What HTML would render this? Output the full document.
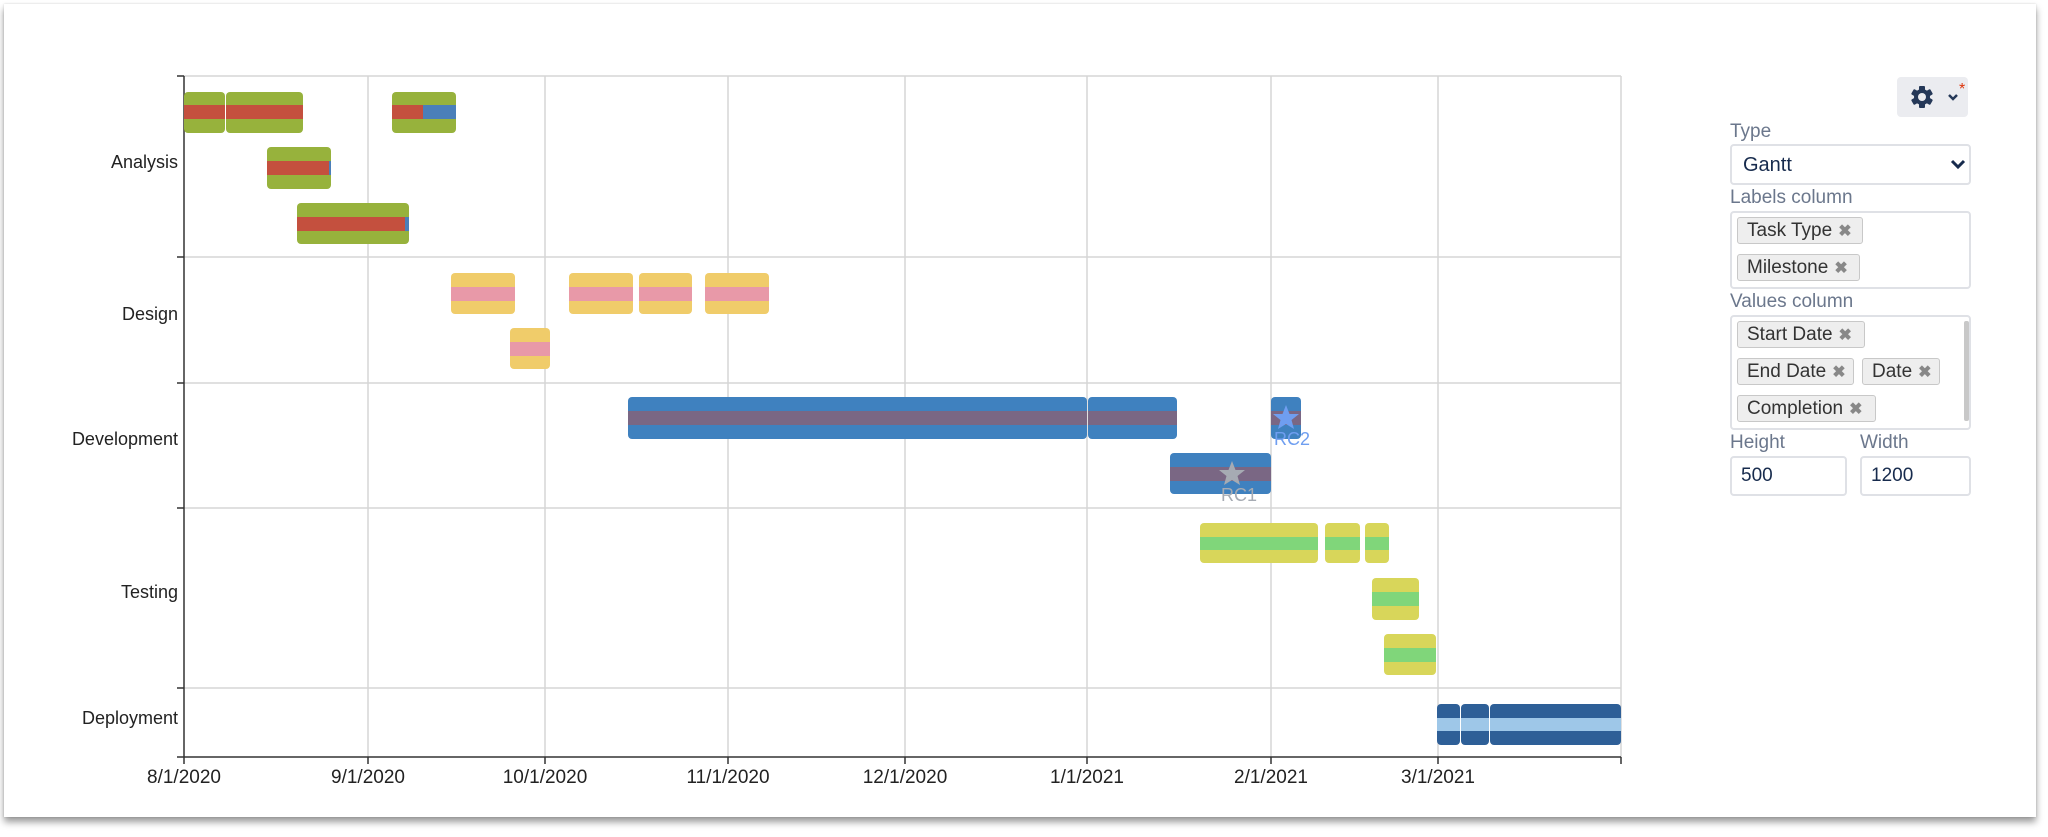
<!DOCTYPE html>
<html><head><meta charset="utf-8"><style>
html,body{margin:0;padding:0;width:2048px;height:837px;background:#fff;overflow:hidden;font-family:"Liberation Sans",sans-serif}
.card{position:absolute;left:4px;top:4px;width:2032px;height:813px;background:#fff;box-shadow:0 5px 7px rgba(0,0,0,.4),0 0 2px rgba(0,0,0,.15)}
.lbl{position:absolute;color:#6b778c;font-size:19px}
.box{position:absolute;border:2px solid #dfe1e6;border-radius:4px;background:#fff;box-sizing:border-box}
.tag{position:absolute;height:27px;border:1px solid #c8c8c8;border-radius:3px;background:#eeeeee;box-sizing:border-box;font-size:19px;color:#333;line-height:25px;padding-left:9px;white-space:nowrap}
.tag b{color:#888;font-size:16px;margin-left:6px}
.inp{position:absolute;border:2px solid #dfe1e6;border-radius:4px;box-sizing:border-box;font-size:19px;color:#172b4d;line-height:36px;padding-left:9px}
</style></head><body>
<div class="card"></div>
<svg style="position:absolute;left:0;top:0" width="2048" height="837" font-family="Liberation Sans, sans-serif">
<g stroke="#d6d6d6" stroke-width="1.5">
<line x1="184" y1="76" x2="1621" y2="76"/><line x1="184" y1="257" x2="1621" y2="257"/><line x1="184" y1="383" x2="1621" y2="383"/><line x1="184" y1="508" x2="1621" y2="508"/><line x1="184" y1="688" x2="1621" y2="688"/>
<line x1="368" y1="76" x2="368" y2="757"/><line x1="545" y1="76" x2="545" y2="757"/><line x1="728" y1="76" x2="728" y2="757"/><line x1="905" y1="76" x2="905" y2="757"/><line x1="1087" y1="76" x2="1087" y2="757"/><line x1="1271" y1="76" x2="1271" y2="757"/><line x1="1438" y1="76" x2="1438" y2="757"/><line x1="1621" y1="76" x2="1621" y2="757"/>
</g>
<g stroke="#333" stroke-width="1.5">
<line x1="184" y1="76" x2="184" y2="764"/><line x1="184" y1="757" x2="1621" y2="757"/>
<line x1="177" y1="76" x2="184" y2="76"/><line x1="177" y1="257" x2="184" y2="257"/><line x1="177" y1="383" x2="184" y2="383"/><line x1="177" y1="508" x2="184" y2="508"/><line x1="177" y1="688" x2="184" y2="688"/><line x1="177" y1="757" x2="184" y2="757"/>
<line x1="368" y1="757" x2="368" y2="764"/><line x1="545" y1="757" x2="545" y2="764"/><line x1="728" y1="757" x2="728" y2="764"/><line x1="905" y1="757" x2="905" y2="764"/><line x1="1087" y1="757" x2="1087" y2="764"/><line x1="1271" y1="757" x2="1271" y2="764"/><line x1="1438" y1="757" x2="1438" y2="764"/><line x1="1621" y1="757" x2="1621" y2="764"/>
</g>
<g font-size="18" fill="#222" text-anchor="end">
<text x="178" y="168">Analysis</text><text x="178" y="320">Design</text><text x="178" y="445">Development</text><text x="178" y="598">Testing</text><text x="178" y="724">Deployment</text>
</g>
<g font-size="19" fill="#222" text-anchor="middle">
<text x="184" y="783">8/1/2020</text><text x="368" y="783">9/1/2020</text><text x="545" y="783">10/1/2020</text><text x="728" y="783">11/1/2020</text><text x="905" y="783">12/1/2020</text><text x="1087" y="783">1/1/2021</text><text x="1271" y="783">2/1/2021</text><text x="1438" y="783">3/1/2021</text>
</g>
<g fill="#97b23c"><rect x="184" y="92" width="41" height="41" rx="4"/><rect x="226" y="92" width="77" height="41" rx="4"/><rect x="392" y="92" width="64" height="41" rx="4"/><rect x="267" y="147" width="64" height="42" rx="4"/><rect x="297" y="203" width="112" height="41" rx="4"/></g>
<g fill="#c4503e"><rect x="184" y="105" width="41" height="14"/><rect x="226" y="105" width="77" height="14"/><rect x="392" y="105" width="31" height="14"/><rect x="267" y="161" width="62" height="14"/><rect x="297" y="217" width="108" height="14"/></g>
<g fill="#4a7fb9"><rect x="423" y="105" width="33" height="14"/><rect x="329" y="161" width="2" height="14"/><rect x="405" y="217" width="4" height="14"/></g>
<g fill="#f0cc6a"><rect x="451" y="273" width="64" height="41" rx="4"/><rect x="569" y="273" width="64" height="41" rx="4"/><rect x="639" y="273" width="53" height="41" rx="4"/><rect x="705" y="273" width="64" height="41" rx="4"/><rect x="510" y="328" width="40" height="41" rx="4"/></g>
<g fill="#e899a8"><rect x="451" y="287" width="64" height="14"/><rect x="569" y="287" width="64" height="14"/><rect x="639" y="287" width="53" height="14"/><rect x="705" y="287" width="64" height="14"/><rect x="510" y="342" width="40" height="14"/></g>
<g fill="#3f81bf"><rect x="628" y="397" width="459" height="42" rx="4"/><rect x="1088" y="397" width="89" height="42" rx="4"/><rect x="1271" y="397" width="30" height="42" rx="4"/><rect x="1170" y="453" width="101" height="41" rx="4"/></g>
<g fill="#7a6784"><rect x="628" y="411" width="459" height="14"/><rect x="1088" y="411" width="89" height="14"/><rect x="1271" y="411" width="30" height="14"/><rect x="1170" y="467" width="101" height="14"/></g>
<polygon points="1286,405 1289.5,414 1299,414 1291.5,420 1294,429 1286,424 1278,429 1280.5,420 1273,414 1282.5,414" fill="#6f9ef0"/>
<text x="1274" y="445" font-size="18" fill="#6f9ef0">RC2</text>
<polygon points="1232,461 1235.5,470 1245,470 1237.5,476 1240,485 1232,480 1224,485 1226.5,476 1219,470 1228.5,470" fill="#a6abb3"/>
<text x="1221" y="501" font-size="18" fill="#a6abb3">RC1</text>
<g fill="#d8d65a"><rect x="1200" y="523" width="118" height="40" rx="4"/><rect x="1325" y="523" width="35" height="40" rx="4"/><rect x="1365" y="523" width="24" height="40" rx="4"/><rect x="1372" y="578" width="47" height="42" rx="4"/><rect x="1384" y="634" width="52" height="41" rx="4"/></g>
<g fill="#80d67a"><rect x="1200" y="537" width="118" height="13"/><rect x="1325" y="537" width="35" height="13"/><rect x="1365" y="537" width="24" height="13"/><rect x="1372" y="592" width="47" height="14"/><rect x="1384" y="648" width="52" height="14"/></g>
<g fill="#2e5f97"><rect x="1437" y="704" width="23" height="41" rx="4"/><rect x="1461" y="704" width="28" height="41" rx="4"/><rect x="1490" y="704" width="131" height="41" rx="4"/></g>
<g fill="#9ec7e8"><rect x="1437" y="718" width="23" height="13"/><rect x="1461" y="718" width="28" height="13"/><rect x="1490" y="718" width="131" height="13"/></g>
<rect x="1897" y="77" width="71" height="40" rx="4" fill="#ebecf0"/>
<g transform="translate(1922,97)" fill="#253858">
<circle r="8"/><g><rect x="-3" y="-11" width="6" height="22" rx="1"/><rect x="-3" y="-11" width="6" height="22" rx="1" transform="rotate(60)"/><rect x="-3" y="-11" width="6" height="22" rx="1" transform="rotate(120)"/></g>
<circle r="4" fill="#ebecf0"/></g>
<path d="M1949 95 l4 4 l4 -4" stroke="#253858" stroke-width="2.5" fill="none"/>
<text x="1959" y="94" font-size="16" fill="#de350b">*</text>
</svg>
<div class="lbl" style="left:1730px;top:121px">Type</div>
<div class="box" style="left:1730px;top:144px;width:241px;height:41px"><span style="position:absolute;left:11px;top:8px;font-size:20px;color:#172b4d">Gantt</span>
<svg style="position:absolute;left:218px;top:13px" width="16" height="12"><path d="M2 2 l6 6 l6 -6" stroke="#172b4d" stroke-width="3" fill="none"/></svg></div>
<div class="lbl" style="left:1730px;top:187px">Labels column</div>
<div class="box" style="left:1730px;top:211px;width:241px;height:78px"></div>
<div class="tag" style="left:1737px;top:217px;width:126px">Task Type<b>✖</b></div>
<div class="tag" style="left:1737px;top:254px;width:123px">Milestone<b>✖</b></div>
<div class="lbl" style="left:1730px;top:291px">Values column</div>
<div class="box" style="left:1730px;top:315px;width:241px;height:115px"><div style="position:absolute;right:0;top:4px;width:5px;height:100px;background:#c8c8c8;border-radius:2px"></div></div>
<div class="tag" style="left:1737px;top:321px;width:128px">Start Date<b>✖</b></div>
<div class="tag" style="left:1737px;top:358px;width:117px">End Date<b>✖</b></div>
<div class="tag" style="left:1862px;top:358px;width:78px">Date<b>✖</b></div>
<div class="tag" style="left:1737px;top:395px;width:139px">Completion<b>✖</b></div>
<div class="lbl" style="left:1730px;top:432px">Height</div>
<div class="lbl" style="left:1860px;top:432px">Width</div>
<div class="inp" style="left:1730px;top:456px;width:117px;height:40px">500</div>
<div class="inp" style="left:1860px;top:456px;width:111px;height:40px">1200</div>
</body></html>
